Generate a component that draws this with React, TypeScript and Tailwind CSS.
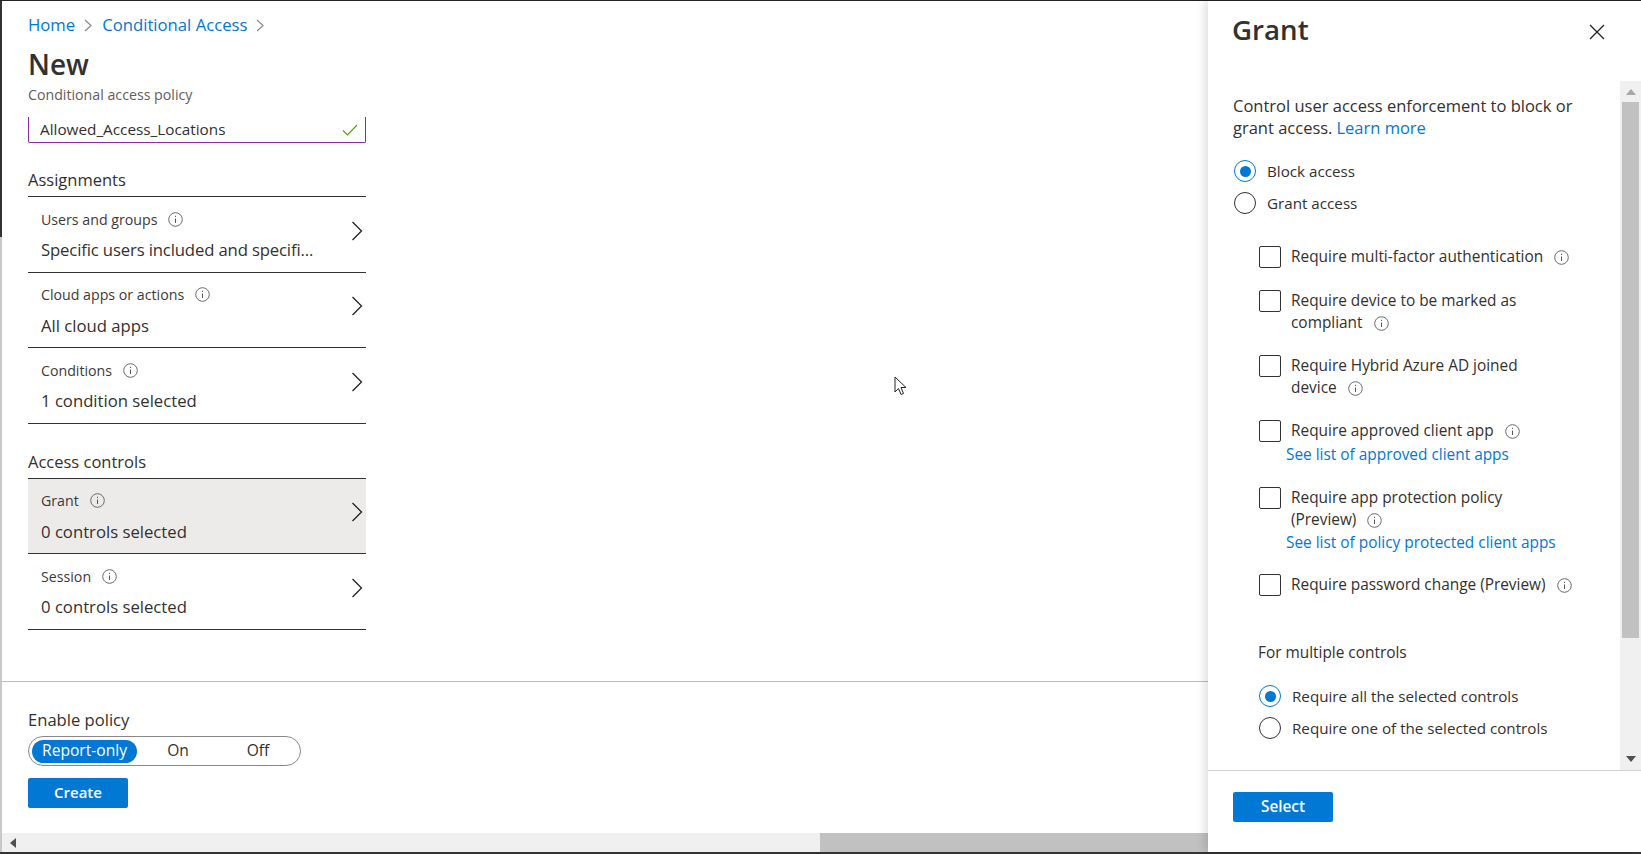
import React from 'react';

const font = { fontFamily: '"Open Sans", "Noto Sans", sans-serif' };

const InfoIcon: React.FC<{ className?: string }> = ({ className = '' }) => (
  <svg width="15" height="15" viewBox="0 0 15 15" fill="none" className={`shrink-0 ${className}`}>
    <circle cx="7.5" cy="7.5" r="6.8" stroke="#6b6b6b" strokeWidth="1" />
    <path d="M7.5 6.5v4.5" stroke="#555" strokeWidth="1" />
    <path d="M7.5 3.8v1.2" stroke="#555" strokeWidth="1" />
  </svg>
);

const Chevron: React.FC = () => (
  <svg width="12" height="20" viewBox="0 0 12 20" fill="none" className="mb-[7px]">
    <path d="M1.5 1l9 9-9 9" stroke="#222" strokeWidth="1.3" />
  </svg>
);

const Crumb: React.FC = () => (
  <svg width="9" height="13" viewBox="0 0 9 13" fill="none">
    <path d="M1 1l6 5.5L1 12" stroke="#8a8a8a" strokeWidth="1.2" />
  </svg>
);

const PolicyRow: React.FC<{ label: string; value: string; active?: boolean; tight?: boolean }> = ({
  label,
  value,
  active,
  tight,
}) => (
  <div
    className={`flex h-[75.5px] items-center justify-between border-b border-[#333] pl-[13px] pr-[3px] ${
      active ? 'bg-[#edebe9]' : ''
    }`}
  >
    <div className="flex flex-col pt-[2px]">
      <div className="flex h-[22px] items-center gap-[11px] text-[14.2px] text-[#3b3a39]">
        <span>{label}</span>
        <InfoIcon />
      </div>
      <div
        className={`mt-[8px] h-[24px] text-[16.7px] leading-[24px] text-[#323130] ${
          tight ? 'tracking-[-0.14px]' : ''
        }`}
      >
        {value}
      </div>
    </div>
    <Chevron />
  </div>
);

const Radio: React.FC<{ checked?: boolean; label: string }> = ({ checked, label }) => (
  <div className="flex h-[22px] items-center gap-[11px] text-[15.2px] text-[#323130]">
    {checked ? (
      <span className="flex size-[22px] items-center justify-center rounded-full border border-[#0078d4]">
        <span className="size-[11px] rounded-full bg-[#0078d4]" />
      </span>
    ) : (
      <span className="size-[22px] rounded-full border border-[#333]" />
    )}
    <span>{label}</span>
  </div>
);

const Check: React.FC<{ className?: string; children: React.ReactNode }> = ({ className = '', children }) => (
  <div className={`flex items-start gap-[10px] ${className}`}>
    <span className="size-[22px] shrink-0 rounded-[2px] border border-[#333]" />
    <div className="text-[15.4px] leading-[22px] text-[#323130]">{children}</div>
  </div>
);

const ArrowUp: React.FC = () => (
  <svg width="10" height="6" viewBox="0 0 10 6"><path d="M5 0l5 6H0z" fill="#a6a6a6" /></svg>
);

const ArrowDown: React.FC = () => (
  <svg width="10" height="6" viewBox="0 0 10 6"><path d="M0 0h10L5 6z" fill="#505050" /></svg>
);

export default function App() {
  return (
    <div style={font} className="flex h-[854px] w-[1641px] flex-col overflow-hidden bg-white">
      <div className="h-px shrink-0 bg-[#222]" />
      <div className="flex min-h-0 flex-1">
        {/* left blade */}
        <div className="relative flex min-w-0 flex-1 flex-col border-l-2 border-[#c8c8c8]">
          <div className="absolute -left-[2px] top-0 h-[236px] w-[2px] bg-[#333]" />
          <div className="h-[680px] shrink-0 pl-[26px]">
            <div className="mt-[12px] flex h-[24px] items-center text-[16.7px] text-[#0078d4]">
              <span>Home</span>
              <span className="mx-[9px]"><Crumb /></span>
              <span>Conditional Access</span>
              <span className="ml-[9px]"><Crumb /></span>
            </div>
            <h1 className="mt-[8px] h-[38px] text-[28px] font-semibold leading-[38px] text-[#323130]">New</h1>
            <div className="mt-[2px] text-[14.2px] leading-[20px] text-[#605e5c]">Conditional access policy</div>
            <div className="mt-[12px] flex h-[26px] w-[338px] items-center justify-between rounded-b-[2px] border-x border-b border-[#8a2da5] pl-[11px] pr-[7px] text-[15.3px] text-[#323130]">
              <span>Allowed_Access_Locations</span>
              <svg width="16" height="12" viewBox="0 0 16 12" fill="none">
                <path d="M1 6.5l4.5 4.5L15 1" stroke="#57a300" strokeWidth="1.2" />
              </svg>
            </div>

            <div className="mt-[25px] h-[24px] text-[16.5px] leading-[24px] text-[#323130]">Assignments</div>
            <div className="mt-[4px] w-[338px] border-t border-[#333]">
              <PolicyRow label="Users and groups" value="Specific users included and specifi..." tight />
              <PolicyRow label="Cloud apps or actions" value="All cloud apps" />
              <PolicyRow label="Conditions" value="1 condition selected" />
            </div>

            <div className="mt-[26px] h-[24px] text-[16.5px] leading-[24px] text-[#323130]">Access controls</div>
            <div className="mt-[4px] w-[338px] border-t border-[#333]">
              <PolicyRow label="Grant" value="0 controls selected" active />
              <PolicyRow label="Session" value="0 controls selected" />
            </div>
          </div>

          <div className="flex-1 border-t border-[#bdbdbd] pl-[26px]">
            <div className="mt-[26px] h-[24px] text-[16.6px] leading-[24px] text-[#323130]">Enable policy</div>
            <div className="mt-[4px] flex h-[30px] w-[273px] items-center rounded-full border border-[#8a8886] px-[3px] text-[15.6px] text-[#323130]">
              <span className="flex h-[23px] w-[105px] items-center justify-center rounded-full bg-[#0078d4] text-white">
                Report-only
              </span>
              <span className="ml-[28px] w-[26px] text-center">On</span>
              <span className="ml-[54px] w-[26px] text-center">Off</span>
            </div>
            <button className="mt-[12px] h-[30px] w-[100px] rounded-[2px] bg-[#0078d4] pb-[2px] text-[15px] font-semibold text-white">
              Create
            </button>
          </div>

          {/* horizontal scrollbar */}
          <div className="flex h-[19px] shrink-0 items-center bg-[#f0f0f0]">
            <svg width="6" height="10" viewBox="0 0 6 10" className="ml-[8px]"><path d="M6 0v10L0 5z" fill="#505050" /></svg>
            <div className="ml-auto h-full w-[388px] bg-[#c1c1c1]" />
          </div>
        </div>

        {/* grant panel */}
        <div className="z-10 flex w-[433px] shrink-0 flex-col bg-white shadow-[-4px_0_8px_rgba(0,0,0,0.12)]">
          <div className="flex h-[80px] shrink-0 items-start justify-between pl-[24px] pr-[36px]">
            <h2 className="mt-[9px] text-[27.7px] font-semibold leading-[38px] text-[#323130]">Grant</h2>
            <svg width="16" height="16" viewBox="0 0 16 16" fill="none" className="mt-[23px]">
              <path d="M1 1l14 14M15 1L1 15" stroke="#222" strokeWidth="1.3" />
            </svg>
          </div>
          <div className="flex min-h-0 flex-1">
            <div className="min-w-0 flex-1 pl-[25px]">
              <div className="mt-[14px] text-[16.5px] leading-[22px] text-[#323130]">
                <div>Control user access enforcement to block or</div>
                <div className="flex gap-[4px]">
                  <span>grant access.</span>
                  <span className="text-[#0078d4]">Learn more</span>
                </div>
              </div>
              <div className="ml-[1px] mt-[21px] flex flex-col gap-[10px]">
                <Radio checked label="Block access" />
                <Radio label="Grant access" />
              </div>
              <div className="ml-[26px] mt-[32px] flex flex-col">
                <Check>
                  <span className="flex items-center gap-[11px]">
                    Require multi-factor authentication <InfoIcon />
                  </span>
                </Check>
                <Check className="mt-[22px]">
                  Require device to be marked as
                  <br />
                  <span className="inline-flex items-center gap-[11px]">compliant <InfoIcon /></span>
                </Check>
                <Check className="mt-[21px]">
                  Require Hybrid Azure AD joined
                  <br />
                  <span className="inline-flex items-center gap-[11px]">device <InfoIcon /></span>
                </Check>
                <Check className="mt-[21px]">
                  <span className="flex items-center gap-[11px]">Require approved client app <InfoIcon /></span>
                </Check>
                <div className="ml-[27px] mt-[2px] text-[15.4px] leading-[22px] text-[#0078d4]">See list of approved client apps</div>
                <Check className="mt-[21px]">
                  Require app protection policy
                  <br />
                  <span className="inline-flex items-center gap-[11px]">(Preview) <InfoIcon /></span>
                </Check>
                <div className="ml-[27px] mt-[1px] text-[15.4px] leading-[22px] text-[#0078d4]">See list of policy protected client apps</div>
                <Check className="mt-[20px]">
                  <span className="flex items-center gap-[11px]">Require password change (Preview) <InfoIcon /></span>
                </Check>
              </div>
              <div className="ml-[25px] mt-[46px] text-[15.4px] leading-[22px] text-[#323130]">For multiple controls</div>
              <div className="ml-[26px] mt-[21px] flex flex-col gap-[10px]">
                <Radio checked label="Require all the selected controls" />
                <Radio label="Require one of the selected controls" />
              </div>
            </div>
            {/* vertical scrollbar */}
            <div className="flex w-[21px] shrink-0 flex-col items-center bg-[#f0f0f0]">
              <div className="flex h-[21px] items-center justify-center"><ArrowUp /></div>
              <div className="h-[536px] w-[17px] bg-[#c1c1c1]" />
              <div className="mb-[1px] mt-auto flex h-[21px] items-center justify-center"><ArrowDown /></div>
            </div>
          </div>
          <div className="h-[82px] shrink-0 border-t border-[#d4d4d4] pl-[25px] pt-[21px]">
            <button className="h-[30px] w-[100px] rounded-[2px] bg-[#0078d4] pb-[1px] text-[15.3px] font-semibold text-white">
              Select
            </button>
          </div>
        </div>
      </div>
      <div className="h-[2px] shrink-0 bg-[#333]" />

      {/* mouse pointer */}
      <svg width="13" height="20" viewBox="0 0 13 20" className="absolute left-[894px] top-[376px]">
        <path d="M1 1v15l3.5-3.5 2.5 6 2.5-1-2.5-6h5z" fill="#fff" stroke="#222" strokeWidth="1" />
      </svg>
    </div>
  );
}
